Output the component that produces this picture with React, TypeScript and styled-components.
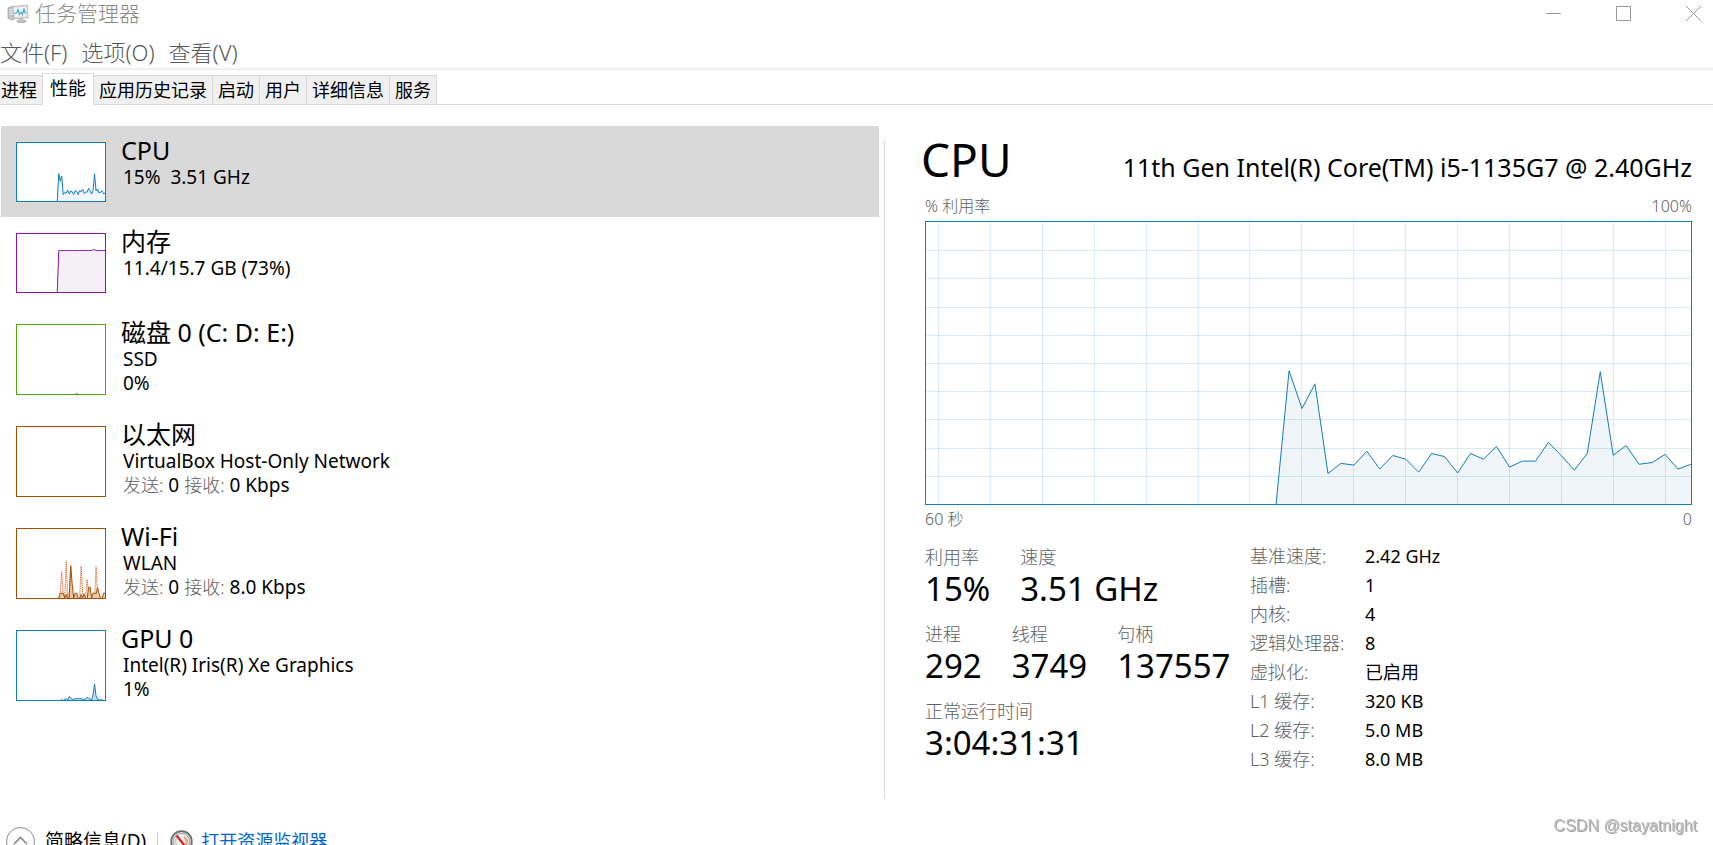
import React from "react";
import styled, { createGlobalStyle } from "styled-components";

const GlobalStyle = createGlobalStyle`
  * { box-sizing: border-box; }
  body {
    margin: 0;
    background: #fff;
    color: #000;
    font-family: "Noto Sans", "Noto Sans CJK SC", sans-serif;
    overflow: hidden;
  }
  button { font: inherit; color: inherit; margin: 0; padding: 0; border: 0; background: none; }
`;

const Window = styled.div`
  display: flex;
  flex-direction: column;
  height: 100vh;
  overflow: hidden;
`;

const TitleBar = styled.header`
  display: flex;
  align-items: center;
  flex: none;
  height: 27px;
  padding: 0 4px 0 7px;
`;

const Title = styled.h1`
  flex: 1;
  margin: 0 0 0 6px;
  font-size: 21px;
  font-weight: 300;
  line-height: 27px;
  color: #888;
`;

const WindowButton = styled.button`
  display: flex;
  align-items: center;
  justify-content: center;
  width: 32px;
  height: 27px;
  margin-left: 38px;
`;

const MenuBar = styled.nav`
  display: flex;
  flex: none;
  gap: 14px;
  height: 43px;
  padding: 10px 0 0;
  border-bottom: 2px solid #f0f0f0;
`;

const MenuButton = styled.button`
  height: 30px;
  font-size: 22px;
  line-height: 30px;
  font-weight: 300;
  color: #585858;
`;

const TabBar = styled.div`
  display: flex;
  flex: none;
  align-items: flex-end;
  height: 35px;
  border-bottom: 1px solid #d9d9d9;
`;

const Tab = styled.button<{ $active?: boolean }>`
  height: ${(p) => (p.$active ? 32 : 29)}px;
  margin-bottom: ${(p) => (p.$active ? -1 : 0)}px;
  padding: 0 ${(p) => (p.$active ? 7 : 5)}px ${(p) => (p.$active ? 3 : 0)}px;
  border: 1px solid #d9d9d9;
  border-bottom: 0;
  border-left-width: ${(p) => (p.$active ? 1 : 0)}px;
  background: ${(p) => (p.$active ? "#fff" : "#f0f0f0")};
  font-size: 18px;
  line-height: 28px;
  &:first-child { padding-left: 1px; border-right: 0; }
`;

const Content = styled.main`
  display: grid;
  flex: none;
  grid-template-columns: 884fr 829fr;
`;

const ResourceList = styled.div`
  padding: 21px 5px 0 1px;
`;

const Resource = styled.button<{ $selected?: boolean; $tall?: boolean }>`
  display: flex;
  align-items: flex-start;
  gap: 15px;
  width: 100%;
  height: ${(p) => (p.$tall ? 102 : 91)}px;
  padding-left: 15px;
  text-align: left;
  background: ${(p) => (p.$selected ? "#d9d9d9" : "transparent")};
`;

const Thumb = styled.svg<{ $tall?: boolean; $color: string }>`
  display: block;
  flex: none;
  width: 90px;
  height: ${(p) => (p.$tall ? 71 : 60)}px;
  margin-top: 16px;
  border: 1px solid ${(p) => p.$color};
  background: #fff;
`;

const ResourceText = styled.span`
  display: flex;
  flex-direction: column;
  padding-top: 9px;
`;

const ResourceName = styled.span`
  font-size: 25px;
  line-height: 30px;
  white-space: pre;
`;

const ResourceDetail = styled.span`
  padding-left: 2px;
  font-size: 19px;
  line-height: 24px;
  white-space: pre;
`;

const Muted = styled.span`
  font-size: 18px;
  font-weight: 300;
  color: #606060;
`;

const Details = styled.section`
  position: relative;
  padding: 24px 21px 25px 41px;
  &::before {
    content: "";
    position: absolute;
    left: 0;
    top: 35px;
    bottom: 0;
    width: 1px;
    background: #d9d9d9;
  }
`;

const Heading = styled.div`
  display: flex;
  align-items: baseline;
  justify-content: space-between;
  height: 60px;
  line-height: 60px;
  white-space: nowrap;
`;

const HeadingName = styled.h2`
  margin: 0 0 0 -4px;
  font-size: 46px;
  font-weight: 400;
`;

const HeadingModel = styled.span`
  font-size: 25px;
`;

const AxisRow = styled.div<{ $below?: boolean }>`
  display: flex;
  justify-content: space-between;
  margin: ${(p) => (p.$below ? "2px 0 11px" : "5px 0 3px")};
  font-size: 16px;
  line-height: 24px;
  font-weight: 300;
  color: #606060;
`;

const Chart = styled.svg`
  display: block;
  width: 100%;
  height: 284px;
  border: 1px solid #117dbb;
`;

const Figures = styled.div`
  display: flex;
`;

const BigStats = styled.div`
  display: flex;
  flex-direction: column;
  flex: none;
  gap: 13px;
  width: 325px;
  padding-top: 3px;
`;

const StatRow = styled.div`
  display: flex;
  gap: 30px;
`;

const Stat = styled.div`
  display: flex;
  flex-direction: column;
`;

const StatLabel = styled.span`
  font-size: 18px;
  line-height: 24px;
  font-weight: 300;
  color: #606060;
`;

const StatValue = styled.span`
  font-size: 33px;
  line-height: 40px;
  white-space: nowrap;
`;

const Specs = styled.dl`
  display: grid;
  grid-template-columns: 115px auto;
  margin: 0;
  font-size: 18px;
  line-height: 29px;
  white-space: nowrap;
`;

const SpecLabel = styled.dt`
  font-weight: 300;
  color: #606060;
`;

const SpecValue = styled.dd`
  margin: 0;
`;

const Footer = styled.footer`
  display: flex;
  flex: none;
  align-items: center;
  height: 57px;
  padding: 28px 6px 0;
`;

const FewerButton = styled.button`
  display: flex;
  align-items: center;
  gap: 10px;
  font-size: 19px;
  line-height: 31px;
`;

const FooterRule = styled.span`
  width: 1px;
  height: 20px;
  margin: 0 12px 0 11px;
  background: #c8c8c8;
`;

const MonitorLink = styled.a`
  display: flex;
  align-items: center;
  gap: 8px;
  font-size: 18px;
  line-height: 31px;
  color: #0066cc;
  text-decoration: none;
`;

const Watermark = styled.span`
  position: fixed;
  right: 16px;
  bottom: 8px;
  font-family: "Liberation Sans", sans-serif;
  font-size: 16px;
  line-height: 22px;
  color: #bcbcbc;
  text-shadow: 1px 1px 0 #a4a4a4;
`;

const BLUE = "#117dbb";
const PURPLE = "#8b12ae";
const GREEN = "#4da60c";
const BROWN = "#a74f01";

const INTERVALS = 59;
const cpuUsage = [
  0, 47.2, 33.9, 42.6, 10.8, 14.4, 13.8, 18.7, 12.4, 17.2, 15.9, 11.3, 17.9, 16.8, 11, 17.9, 15.9,
  20.4, 13.1, 15.2, 15.2, 21.8, 17.2, 12, 17.9, 46.9, 17.3, 20.7, 14.1, 14.7, 17.6, 12.4, 14.1,
];
const memoryUsage = [0, ...Array(23).fill(71.5), 73, 73, ...Array(7).fill(71.5)];
const diskUsage = [...Array(12).fill(-2), -2, 1.5, -2, ...Array(18).fill(-2)];
const gpuUsage = [
  -2, -2, -2, 1, -1, 1, 2, 0, 5, 3, 1, 1, 2, 2, 2, 2, 2, 1, 1, 1, 4, 3, 1, 0, 8, 23, 6, 1, 1, -1, 1, -2, -2,
];
const wifiReceive = [
  -2, 0, 7, 7, 7, 0, 5, -1, 0, 47, 20, 0, 7, 7, 0, -2, 5, 0, 6, 0, -2, 15, 16, 0, 7, 7, 6, 15, 7, 0, -2, 7, 7,
];
const wifiSend = [
  -2, 0, 8, 38, 5, 0, 54, 0, 8, 46, 8, -2, -2, -2, -2, 0, 46, 8, -2, 0, 27, 10, -2, -2, -2, 0, 46, 8, -2, -2, -2, -2, -2,
];

function toPoints(values: number[], width: number, height: number) {
  const step = width / INTERVALS;
  const start = width - (values.length - 1) * step;
  return values.map((v, i) => `${start + i * step},${height - (v / 100) * height}`);
}

interface SeriesProps {
  values: number[];
  width: number;
  height: number;
  color: string;
  fill?: string;
  dash?: string;
}

function Series({ values, width, height, color, fill = "none", dash }: SeriesProps) {
  const line = toPoints(values, width, height);
  return (
    <>
      <polygon points={[...line, `${width},${height}`].join(" ")} fill={fill} />
      <polyline
        points={line.join(" ")}
        fill="none"
        stroke={color}
        strokeDasharray={dash}
        vectorEffect="non-scaling-stroke"
      />
    </>
  );
}

function UsageChart() {
  const w = 765;
  const h = 282;
  return (
    <Chart viewBox={`0 0 ${w} ${h}`} preserveAspectRatio="none" role="img" aria-label="CPU 利用率">
      <g stroke="#d9eaf4" shapeRendering="crispEdges">
        {Array.from({ length: 15 }, (_, i) => (
          <line key={`v${i}`} x1={12.5 + i * 51.9} x2={12.5 + i * 51.9} y1={0} y2={h} vectorEffect="non-scaling-stroke" />
        ))}
        {Array.from({ length: 9 }, (_, i) => (
          <line
            key={`h${i}`}
            x1={0}
            x2={w}
            y1={((i + 1) * h) / 10 + 0.5}
            y2={((i + 1) * h) / 10 + 0.5}
            vectorEffect="non-scaling-stroke"
          />
        ))}
      </g>
      <Series values={cpuUsage} width={w} height={h} color={BLUE} fill="rgba(17,105,170,0.065)" />
    </Chart>
  );
}

interface ResourceItem {
  name: string;
  color: string;
  series: { values: number[]; fill?: string; dash?: string; color?: string }[];
  lines: React.ReactNode[];
  tall?: boolean;
  selected?: boolean;
}

const traffic = (sent: string, received: string) => (
  <>
    <Muted>发送:</Muted> {sent} <Muted>接收:</Muted> {received}
  </>
);

const resources: ResourceItem[] = [
  {
    name: "CPU",
    color: BLUE,
    series: [{ values: cpuUsage, fill: "#f0f6fa" }],
    lines: ["15%  3.51 GHz"],
    selected: true,
  },
  {
    name: "内存",
    color: PURPLE,
    series: [{ values: memoryUsage, fill: "#f4f0f5" }],
    lines: ["11.4/15.7 GB (73%)"],
  },
  { name: "磁盘 0 (C: D: E:)", color: GREEN, series: [{ values: diskUsage }], lines: ["SSD", "0%"], tall: true },
  {
    name: "以太网",
    color: BROWN,
    series: [],
    lines: ["VirtualBox Host-Only Network", traffic("0", "0 Kbps")],
    tall: true,
  },
  {
    name: "Wi-Fi",
    color: BROWN,
    series: [
      { values: wifiSend, dash: "1 1", fill: "#fbeee4", color: "#d0541c" },
      { values: wifiReceive, fill: "#e9c8ad" },
    ],
    lines: ["WLAN", traffic("0", "8.0 Kbps")],
    tall: true,
  },
  {
    name: "GPU 0",
    color: BLUE,
    series: [{ values: gpuUsage, fill: "#c4dfee" }],
    lines: ["Intel(R) Iris(R) Xe Graphics", "1%"],
    tall: true,
  },
];

const tabs = ["进程", "性能", "应用历史记录", "启动", "用户", "详细信息", "服务"];

const statRows = [
  [["利用率", "15%"], ["速度", "3.51 GHz"]],
  [["进程", "292"], ["线程", "3749"], ["句柄", "137557"]],
  [["正常运行时间", "3:04:31:31"]],
];

const specs = [
  ["基准速度:", "2.42 GHz"],
  ["插槽:", "1"],
  ["内核:", "4"],
  ["逻辑处理器:", "8"],
  ["虚拟化:", "已启用"],
  ["L1 缓存:", "320 KB"],
  ["L2 缓存:", "5.0 MB"],
  ["L3 缓存:", "8.0 MB"],
];

const AppIcon = () => (
  <svg width="22" height="20" viewBox="0 0 22 20" aria-hidden="true">
    <path d="M1 4 L6 2 L8 3 L8 15 L4 16 L1 14 Z" fill="#c3c5c6" stroke="#9a9da0" strokeWidth=".7" />
    <path d="M2.500 6 L6 5 M2.500 8 L6 7 M2.500 10 L6 9.500" stroke="#f3f4f4" strokeWidth=".8" />
    <ellipse cx="14.500" cy="17.300" rx="5" ry="1.800" fill="#b4b6b8" />
    <path d="M12 14 L16 14 L17 17 L11.500 17 Z" fill="#c9cbcc" />
    <path d="M5.500 2.500 L20.500 1 L21 14 L7 14.500 Z" fill="#d8dadb" stroke="#b0b3b5" strokeWidth=".7" />
    <path d="M7 4 L19.300 2.600 L19.600 12.300 L8 12.900 Z" fill="#eef6fa" />
    <path d="M7.500 9.500 L10 8.500 L11 5.500 L12.500 10.500 L14 8 L15.500 10.500 L17 5 L18 9 L19.500 9" fill="none" stroke="#4ba3d9" strokeWidth="1.100" />
  </svg>
);

const GaugeIcon = () => (
  <svg width="23" height="23" viewBox="0 0 23 23" aria-hidden="true">
    <circle cx="11.500" cy="11.500" r="10.300" fill="#d7dbda" stroke="#68716f" strokeWidth="1.800" />
    <circle cx="11.500" cy="11.500" r="8" fill="#f0f1ef" stroke="#9ca4a2" strokeWidth="1" />
    <path d="M14 7 A6 6 0 0 1 16 15" fill="none" stroke="#e0a47a" strokeWidth="2.200" />
    <path d="M6.500 8 A6 6 0 0 0 7 15" fill="none" stroke="#c9cdcb" strokeWidth="1.500" />
    <path d="M6.500 5.500 L14.500 15.500" stroke="#d41f26" strokeWidth="2.200" />
  </svg>
);

export default function App() {
  return (
    <Window>
      <GlobalStyle />
      <TitleBar>
        <AppIcon />
        <Title>任务管理器</Title>
        <WindowButton aria-label="最小化">
          <svg width="15" height="15"><path d="M0 7.500H15" stroke="#999" /></svg>
        </WindowButton>
        <WindowButton aria-label="最大化">
          <svg width="15" height="15"><path d="M.5 .5H14.500V14.500H.5Z" fill="none" stroke="#999" /></svg>
        </WindowButton>
        <WindowButton aria-label="关闭">
          <svg width="15" height="15"><path d="M0 0L15 15M15 0L0 15" stroke="#999" /></svg>
        </WindowButton>
      </TitleBar>
      <MenuBar>
        <MenuButton>文件(F)</MenuButton>
        <MenuButton>选项(O)</MenuButton>
        <MenuButton>查看(V)</MenuButton>
      </MenuBar>
      <TabBar role="tablist">
        {tabs.map((tab, i) => (
          <Tab key={tab} role="tab" aria-selected={i === 1} $active={i === 1}>
            {tab}
          </Tab>
        ))}
      </TabBar>
      <Content>
        <ResourceList>
          {resources.map((r) => (
            <Resource key={r.name} $selected={r.selected} $tall={r.tall}>
              <Thumb $tall={r.tall} $color={r.color} viewBox="0 0 88 69" preserveAspectRatio="none" aria-hidden="true">
                {r.series.map((s, i) => (
                  <Series key={i} width={88} height={69} color={s.color ?? r.color} values={s.values} fill={s.fill} dash={s.dash} />
                ))}
              </Thumb>
              <ResourceText>
                <ResourceName>{r.name}</ResourceName>
                {r.lines.map((line, i) => (
                  <ResourceDetail key={i}>{line}</ResourceDetail>
                ))}
              </ResourceText>
            </Resource>
          ))}
        </ResourceList>
        <Details>
          <Heading>
            <HeadingName>CPU</HeadingName>
            <HeadingModel>11th Gen Intel(R) Core(TM) i5-1135G7 @ 2.40GHz</HeadingModel>
          </Heading>
          <AxisRow>
            <span>% 利用率</span>
            <span>100%</span>
          </AxisRow>
          <UsageChart />
          <AxisRow $below>
            <span>60 秒</span>
            <span>0</span>
          </AxisRow>
          <Figures>
            <BigStats>
              {statRows.map((row, i) => (
                <StatRow key={i}>
                  {row.map(([label, value]) => (
                    <Stat key={label}>
                      <StatLabel>{label}</StatLabel>
                      <StatValue>{value}</StatValue>
                    </Stat>
                  ))}
                </StatRow>
              ))}
            </BigStats>
            <Specs>
              {specs.map(([label, value]) => (
                <React.Fragment key={label}>
                  <SpecLabel>{label}</SpecLabel>
                  <SpecValue>{value}</SpecValue>
                </React.Fragment>
              ))}
            </Specs>
          </Figures>
        </Details>
      </Content>
      <Footer>
        <FewerButton>
          <svg width="29" height="29" viewBox="0 0 29 29" fill="none" aria-hidden="true">
            <circle cx="14.500" cy="14.500" r="14" stroke="#8a8a8a" />
            <path d="M8 17 L14.500 10.500 L21 17" stroke="#8a8a8a" strokeWidth="1.600" />
          </svg>
          简略信息(D)
        </FewerButton>
        <FooterRule />
        <MonitorLink href="#resource-monitor">
          <GaugeIcon />
          打开资源监视器
        </MonitorLink>
      </Footer>
      <Watermark>CSDN @stayatnight</Watermark>
    </Window>
  );
}
